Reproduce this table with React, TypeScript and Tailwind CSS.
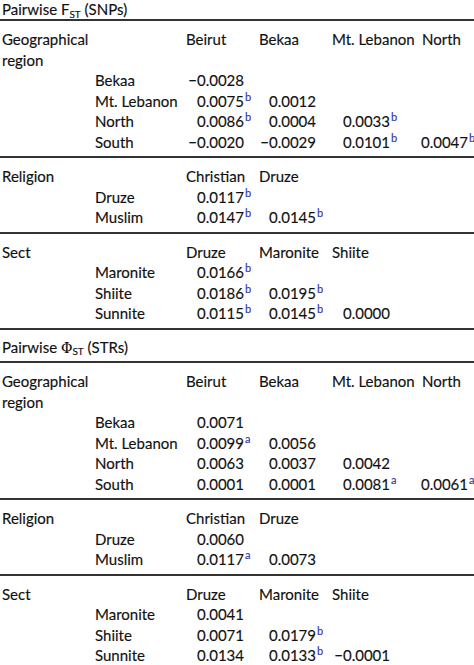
import React from "react";

type Val = { v: string; s?: string };
type Cell = string | Val | null;

// right edge of the number in each value column (superscript hangs past it)
const boxW = ["", "", "w-[58px]", "w-[57px]", "w-[58px]", "w-[46px]"];

const snps: Cell[][][] = [
  [
    ["Geographical region", null, "Beirut", "Bekaa", "Mt. Lebanon", "North"],
    [null, "Bekaa", { v: "−0.0028" }],
    [null, "Mt. Lebanon", { v: "0.0075", s: "b" }, { v: "0.0012" }],
    [null, "North", { v: "0.0086", s: "b" }, { v: "0.0004" }, { v: "0.0033", s: "b" }],
    [null, "South", { v: "−0.0020" }, { v: "−0.0029" }, { v: "0.0101", s: "b" }, { v: "0.0047", s: "b" }],
  ],
  [
    ["Religion", null, "Christian", "Druze"],
    [null, "Druze", { v: "0.0117", s: "b" }],
    [null, "Muslim", { v: "0.0147", s: "b" }, { v: "0.0145", s: "b" }],
  ],
  [
    ["Sect", null, "Druze", "Maronite", "Shiite"],
    [null, "Maronite", { v: "0.0166", s: "b" }],
    [null, "Shiite", { v: "0.0186", s: "b" }, { v: "0.0195", s: "b" }],
    [null, "Sunnite", { v: "0.0115", s: "b" }, { v: "0.0145", s: "b" }, { v: "0.0000" }],
  ],
];

const strs: Cell[][][] = [
  [
    ["Geographical region", null, "Beirut", "Bekaa", "Mt. Lebanon", "North"],
    [null, "Bekaa", { v: "0.0071" }],
    [null, "Mt. Lebanon", { v: "0.0099", s: "a" }, { v: "0.0056" }],
    [null, "North", { v: "0.0063" }, { v: "0.0037" }, { v: "0.0042" }],
    [null, "South", { v: "0.0001" }, { v: "0.0001" }, { v: "0.0081", s: "a" }, { v: "0.0061", s: "a" }],
  ],
  [
    ["Religion", null, "Christian", "Druze"],
    [null, "Druze", { v: "0.0060" }],
    [null, "Muslim", { v: "0.0117", s: "a" }, { v: "0.0073" }],
  ],
  [
    ["Sect", null, "Druze", "Maronite", "Shiite"],
    [null, "Maronite", { v: "0.0041" }],
    [null, "Shiite", { v: "0.0071" }, { v: "0.0179", s: "b" }],
    [null, "Sunnite", { v: "0.0134" }, { v: "0.0133", s: "b" }, { v: "−0.0001" }],
  ],
];

function Section({ rows, line = true }: { rows: Cell[][]; line?: boolean }) {
  return (
    <div className={`pt-[8px] pb-[4px] ${line ? "border-b-2 border-[#333]" : ""}`}>
      <div className="grid grid-cols-[93px_91px_73px_73px_90px_1fr] pl-[2px]">
        {rows.map((row, r) =>
          [0, 1, 2, 3, 4, 5].map((c) => {
            const cell = row[c];
            if (cell == null) return <div key={`${r}-${c}`} />;
            if (typeof cell === "string") return <div key={`${r}-${c}`}>{cell}</div>;
            return (
              <div key={`${r}-${c}`} className="flex items-baseline whitespace-nowrap">
                <span className={`flex justify-end shrink-0 ${boxW[c]}`}>{cell.v}</span>
                {cell.s && (
                  <span className="relative -top-[6px] ml-[1px] text-[11px] leading-none text-[#3434a6]">
                    {cell.s}
                  </span>
                )}
              </div>
            );
          })
        )}
      </div>
    </div>
  );
}

export default function App() {
  return (
    <div className="w-[474px] h-[665px] overflow-hidden bg-white text-[#111] font-['Lato',sans-serif] text-[15px] leading-[20.5px] [-webkit-text-stroke:0.15px]">
      <div className="h-[22px] border-b-2 border-[#333] pl-[2px]">
        <div className="-mt-[1px]">
          Pairwise F<sub className="text-[10px] leading-none">ST</sub> (SNPs)
        </div>
      </div>
      {snps.map((rows, i) => (
        <Section key={i} rows={rows} />
      ))}
      <div className="pt-[7px] pb-[3px] border-b-2 border-[#333] pl-[2px]">
        Pairwise <span className="font-['DejaVu_Serif',serif] text-[14px]">Φ</span>
        <sub className="text-[10px] leading-none">ST</sub> (STRs)
      </div>
      {strs.map((rows, i) => (
        <Section key={i} rows={rows} line={i < 2} />
      ))}
    </div>
  );
}
